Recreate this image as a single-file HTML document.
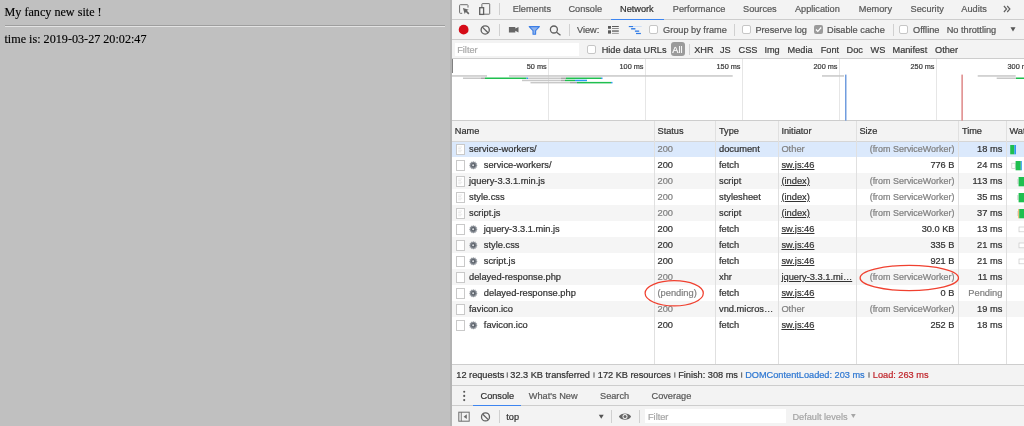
<!DOCTYPE html><html><head><meta charset="utf-8"><style>
html,body{margin:0;padding:0;width:1024px;height:426px;overflow:hidden;position:relative;background:#c0c0c0;font-family:"Liberation Sans",sans-serif;}
div{box-sizing:border-box;}
.u{text-decoration:underline;}
</style></head><body><div style="position:absolute;left:0;top:0;width:1024px;height:426px;will-change:transform">
<div style="position:absolute;left:0;top:0;width:450px;height:426px;background:#c0c0c0;font-family:'Liberation Serif',serif;">
<div style="position:absolute;left:4.5px;top:4.61px;font-family:'Liberation Serif', serif;font-size:12.15px;line-height:14.58px;color:#000;white-space:nowrap;-webkit-text-stroke:0.15px #000">My fancy new site !</div>
<div style="position:absolute;left:4.5px;top:25px;width:440.5px;height:1px;background:#9e9e9e"></div>
<div style="position:absolute;left:4.5px;top:26px;width:440.5px;height:1px;background:#e3e3e3"></div>
<div style="position:absolute;left:4.5px;top:31.61px;font-family:'Liberation Serif', serif;font-size:12.15px;line-height:14.58px;color:#000;white-space:nowrap;-webkit-text-stroke:0.15px #000">time is: 2019-03-27 20:02:47</div>
</div>
<div style="position:absolute;left:451px;top:0;width:573px;height:426px;background:#fff;overflow:hidden">
</div>
<div style="position:absolute;left:451px;top:0px;width:573px;height:19px;background:#f3f3f3"></div>
<div style="position:absolute;left:451px;top:19px;width:573px;height:1px;background:#cdcdcd"></div>
<div style="position:absolute;left:451px;top:20px;width:573px;height:19px;background:#f3f3f3"></div>
<div style="position:absolute;left:451px;top:39px;width:573px;height:1px;background:#cdcdcd"></div>
<div style="position:absolute;left:451px;top:40px;width:573px;height:18px;background:#f3f3f3"></div>
<div style="position:absolute;left:451px;top:58px;width:573px;height:1px;background:#cdcdcd"></div>
<svg style="position:absolute;left:0;top:0" width="1024" height="426" viewBox="0 0 1024 426">
<g fill="none" stroke="#6d6d6d" stroke-width="1">
<path d="M462.2 13.3 H460.3 Q459.6 13.3 459.6 12.6 V5.4 Q459.6 4.7 460.3 4.7 H467.3 Q468 4.7 468 5.4 V7.6"/>
<rect x="481.9" y="3.6" width="7.8" height="10.6" rx="0.5"/>
</g>
<path d="M462.9 7.9 L468.7 9.7 L466.9 10.8 L469.4 13.3 L468.3 14.4 L465.8 11.9 L464.7 13.9 Z" fill="#666"/>
<rect x="479.7" y="7.7" width="3.9" height="6.7" fill="#f3f3f3" stroke="#5f5f5f" stroke-width="1.3"/>
</svg>
<div style="position:absolute;left:499px;top:3px;width:1px;height:12px;background:#d0d0d0"></div>
<div style="position:absolute;left:512.7px;top:4.39px;font-size:9.2px;line-height:11.04px;color:#5a5a5a;white-space:nowrap;-webkit-text-stroke:0.22px #5a5a5a;">Elements</div>
<div style="position:absolute;left:568.4px;top:4.39px;font-size:9.2px;line-height:11.04px;color:#5a5a5a;white-space:nowrap;-webkit-text-stroke:0.22px #5a5a5a;">Console</div>
<div style="position:absolute;left:620px;top:4.39px;font-size:9.2px;line-height:11.04px;color:#333;white-space:nowrap;-webkit-text-stroke:0.22px #333;">Network</div>
<div style="position:absolute;left:672.8px;top:4.39px;font-size:9.2px;line-height:11.04px;color:#5a5a5a;white-space:nowrap;-webkit-text-stroke:0.22px #5a5a5a;">Performance</div>
<div style="position:absolute;left:743px;top:4.39px;font-size:9.2px;line-height:11.04px;color:#5a5a5a;white-space:nowrap;-webkit-text-stroke:0.22px #5a5a5a;">Sources</div>
<div style="position:absolute;left:794.9px;top:4.39px;font-size:9.2px;line-height:11.04px;color:#5a5a5a;white-space:nowrap;-webkit-text-stroke:0.22px #5a5a5a;">Application</div>
<div style="position:absolute;left:858.8px;top:4.39px;font-size:9.2px;line-height:11.04px;color:#5a5a5a;white-space:nowrap;-webkit-text-stroke:0.22px #5a5a5a;">Memory</div>
<div style="position:absolute;left:910.6px;top:4.39px;font-size:9.2px;line-height:11.04px;color:#5a5a5a;white-space:nowrap;-webkit-text-stroke:0.22px #5a5a5a;">Security</div>
<div style="position:absolute;left:961.3px;top:4.39px;font-size:9.2px;line-height:11.04px;color:#5a5a5a;white-space:nowrap;-webkit-text-stroke:0.22px #5a5a5a;">Audits</div>
<svg style="position:absolute;left:1003px;top:5px" width="9" height="9" viewBox="0 0 9 9"><path d="M0.9 1 L3.6 4 L0.9 7 M4.2 1 L6.9 4 L4.2 7" fill="none" stroke="#606060" stroke-width="1.15"/></svg>
<div style="position:absolute;left:611px;top:18.5px;width:53px;height:1.5px;background:#3d85f0"></div>
<svg style="position:absolute;left:0;top:0" width="1024" height="426" viewBox="0 0 1024 426">
<circle cx="463.65" cy="29.65" r="4.9" fill="#d50b17"/>
<g fill="none" stroke="#5f5f5f" stroke-width="1.3">
<circle cx="485.2" cy="29.95" r="4.1"/>
<path d="M482.4 27.1 L488 32.8"/>
<circle cx="553.9" cy="29.5" r="3.5"/>
<path d="M556.5 32.2 L560.5 35.2"/>
</g>
<path d="M508.9 27 H515.3 V28.6 L518.5 27 V32.4 L515.3 30.8 V32.4 H508.9 Z" fill="#666"/>
<path d="M529.2 26.6 H539.4 L535.6 30.6 V34.3 H533 V30.6 Z" fill="#8fb3ec" stroke="#3b7ee6" stroke-width="1.1" stroke-linejoin="round"/>
<g fill="#5a5a5a">
<rect x="608" y="26" width="3" height="2.8"/><rect x="612" y="26" width="6.8" height="1"/><rect x="612" y="28" width="6.8" height="0.9" fill="#808080"/>
<rect x="608" y="30.3" width="3" height="3.3"/><rect x="612" y="30.4" width="6.8" height="1.3"/><rect x="612" y="32.9" width="6.8" height="0.9" fill="#909090"/>
</g>
<g fill="#2f7be6">
<rect x="628.8" y="26" width="4.3" height="1.1"/><rect x="633" y="26.1" width="8.7" height="0.8" fill="#c5d8f5"/>
<rect x="631.1" y="28.1" width="4.3" height="1.4"/>
<rect x="634.9" y="30.5" width="4.3" height="1.3"/>
<rect x="636" y="32.9" width="4.9" height="1.2"/>
</g>
</svg>
<div style="position:absolute;left:499px;top:24px;width:1px;height:12px;background:#d0d0d0"></div>
<div style="position:absolute;left:569px;top:24px;width:1px;height:12px;background:#d0d0d0"></div>
<div style="position:absolute;left:577px;top:24.89px;font-size:9.2px;line-height:11.04px;color:#555;white-space:nowrap;-webkit-text-stroke:0.22px #555;">View:</div>
<div style="position:absolute;left:649.3px;top:25.4px;width:9px;height:9px;background:#fff;border:1px solid #c6c6c6;border-radius:2px"></div>
<div style="position:absolute;left:663px;top:24.89px;font-size:9.2px;line-height:11.04px;color:#555;white-space:nowrap;-webkit-text-stroke:0.22px #555;">Group by frame</div>
<div style="position:absolute;left:734px;top:24px;width:1px;height:12px;background:#d0d0d0"></div>
<div style="position:absolute;left:741.5px;top:25.4px;width:9px;height:9px;background:#fff;border:1px solid #c6c6c6;border-radius:2px"></div>
<div style="position:absolute;left:755.4px;top:24.89px;font-size:9.2px;line-height:11.04px;color:#555;white-space:nowrap;-webkit-text-stroke:0.22px #555;">Preserve log</div>
<div style="position:absolute;left:813.5px;top:25.4px;width:9px;height:9px;background:#9b9b9b;border-radius:2px"></div>
<svg style="position:absolute;left:813.5px;top:25.4px" width="9" height="9"><path d="M2 4.5 L3.8 6.4 L7.2 2.5" fill="none" stroke="#fff" stroke-width="1.2"/></svg>
<div style="position:absolute;left:827.1px;top:24.89px;font-size:9.2px;line-height:11.04px;color:#555;white-space:nowrap;-webkit-text-stroke:0.22px #555;">Disable cache</div>
<div style="position:absolute;left:892.5px;top:24px;width:1px;height:12px;background:#d0d0d0"></div>
<div style="position:absolute;left:899.2px;top:25.4px;width:9px;height:9px;background:#fff;border:1px solid #c6c6c6;border-radius:2px"></div>
<div style="position:absolute;left:913px;top:24.89px;font-size:9.2px;line-height:11.04px;color:#555;white-space:nowrap;-webkit-text-stroke:0.22px #555;">Offline</div>
<div style="position:absolute;left:946.7px;top:24.89px;font-size:9.2px;line-height:11.04px;color:#555;white-space:nowrap;-webkit-text-stroke:0.22px #555;">No throttling</div>
<div style="position:absolute;left:455px;top:43px;width:123.6px;height:13.2px;background:#fff"></div>
<div style="position:absolute;left:457.2px;top:45.29px;font-size:9.2px;line-height:11.04px;color:#a9a9a9;white-space:nowrap;-webkit-text-stroke:0.22px #a9a9a9;">Filter</div>
<div style="position:absolute;left:587.4px;top:45px;width:9px;height:9px;background:#fff;border:1px solid #c6c6c6;border-radius:2px"></div>
<div style="position:absolute;left:601.7px;top:44.79px;font-size:9.2px;line-height:11.04px;color:#3a3a3a;white-space:nowrap;-webkit-text-stroke:0.22px #3a3a3a;">Hide data URLs</div>
<div style="position:absolute;left:671px;top:42.2px;width:14px;height:14.2px;background:#9b9b9b;border-radius:3px"></div>
<div style="position:absolute;left:672.3px;top:44.79px;font-size:9.2px;line-height:11.04px;color:#fff;white-space:nowrap;-webkit-text-stroke:0.22px #fff;">All</div>
<div style="position:absolute;left:688.5px;top:43.5px;width:1px;height:11.5px;background:#d0d0d0"></div>
<div style="position:absolute;left:694.2px;top:44.79px;font-size:9.2px;line-height:11.04px;color:#3a3a3a;white-space:nowrap;-webkit-text-stroke:0.22px #3a3a3a;">XHR</div>
<div style="position:absolute;left:719.9px;top:44.79px;font-size:9.2px;line-height:11.04px;color:#3a3a3a;white-space:nowrap;-webkit-text-stroke:0.22px #3a3a3a;">JS</div>
<div style="position:absolute;left:738.6px;top:44.79px;font-size:9.2px;line-height:11.04px;color:#3a3a3a;white-space:nowrap;-webkit-text-stroke:0.22px #3a3a3a;">CSS</div>
<div style="position:absolute;left:764.4px;top:44.79px;font-size:9.2px;line-height:11.04px;color:#3a3a3a;white-space:nowrap;-webkit-text-stroke:0.22px #3a3a3a;">Img</div>
<div style="position:absolute;left:787.6px;top:44.79px;font-size:9.2px;line-height:11.04px;color:#3a3a3a;white-space:nowrap;-webkit-text-stroke:0.22px #3a3a3a;">Media</div>
<div style="position:absolute;left:820.7px;top:44.79px;font-size:9.2px;line-height:11.04px;color:#3a3a3a;white-space:nowrap;-webkit-text-stroke:0.22px #3a3a3a;">Font</div>
<div style="position:absolute;left:846.5px;top:44.79px;font-size:9.2px;line-height:11.04px;color:#3a3a3a;white-space:nowrap;-webkit-text-stroke:0.22px #3a3a3a;">Doc</div>
<div style="position:absolute;left:870.5px;top:44.79px;font-size:9.2px;line-height:11.04px;color:#3a3a3a;white-space:nowrap;-webkit-text-stroke:0.22px #3a3a3a;">WS</div>
<div style="position:absolute;left:892.5px;top:44.79px;font-size:9.2px;line-height:11.04px;color:#3a3a3a;white-space:nowrap;-webkit-text-stroke:0.22px #3a3a3a;">Manifest</div>
<div style="position:absolute;left:935px;top:44.79px;font-size:9.2px;line-height:11.04px;color:#3a3a3a;white-space:nowrap;-webkit-text-stroke:0.22px #3a3a3a;">Other</div>
<div style="position:absolute;left:451px;top:59px;width:573px;height:61px;background:#fff"></div>
<div style="position:absolute;left:451px;top:120px;width:573px;height:1px;background:#cdcdcd"></div>
<div style="position:absolute;left:548px;top:59px;width:1px;height:61px;background:#e6e6e6"></div>
<div style="position:absolute;left:645px;top:59px;width:1px;height:61px;background:#e6e6e6"></div>
<div style="position:absolute;left:742px;top:59px;width:1px;height:61px;background:#e6e6e6"></div>
<div style="position:absolute;left:839px;top:59px;width:1px;height:61px;background:#e6e6e6"></div>
<div style="position:absolute;left:936px;top:59px;width:1px;height:61px;background:#e6e6e6"></div>
<div style="position:absolute;right:477.4px;top:63.49px;font-size:7.3px;line-height:8.76px;color:#3c3c3c;white-space:nowrap;text-align:right;-webkit-text-stroke:0.22px #3c3c3c;">50 ms</div>
<div style="position:absolute;right:380.5px;top:63.49px;font-size:7.3px;line-height:8.76px;color:#3c3c3c;white-space:nowrap;text-align:right;-webkit-text-stroke:0.22px #3c3c3c;">100 ms</div>
<div style="position:absolute;right:283.5px;top:63.49px;font-size:7.3px;line-height:8.76px;color:#3c3c3c;white-space:nowrap;text-align:right;-webkit-text-stroke:0.22px #3c3c3c;">150 ms</div>
<div style="position:absolute;right:186.5px;top:63.49px;font-size:7.3px;line-height:8.76px;color:#3c3c3c;white-space:nowrap;text-align:right;-webkit-text-stroke:0.22px #3c3c3c;">200 ms</div>
<div style="position:absolute;right:89.5px;top:63.49px;font-size:7.3px;line-height:8.76px;color:#3c3c3c;white-space:nowrap;text-align:right;-webkit-text-stroke:0.22px #3c3c3c;">250 ms</div>
<div style="position:absolute;right:-7.5px;top:63.49px;font-size:7.3px;line-height:8.76px;color:#3c3c3c;white-space:nowrap;text-align:right;-webkit-text-stroke:0.22px #3c3c3c;">300 ms</div>
<div style="position:absolute;left:452px;top:59px;width:1.2px;height:13.5px;background:#808080"></div>
<svg style="position:absolute;left:0;top:0" width="1024" height="426" viewBox="0 0 1024 426">
<g>
<rect x="452" y="75.2" width="35" height="1.5" fill="#c8c8c8"/>
<rect x="509" y="75.2" width="223.7" height="1.5" fill="#c8c8c8"/>
<rect x="822" y="75.2" width="22" height="1.5" fill="#c8c8c8"/>
<rect x="977.7" y="75.2" width="38" height="1.5" fill="#c8c8c8"/>
<rect x="463" y="77.5" width="18" height="1.5" fill="#c8c8c8"/>
<rect x="481" y="77.5" width="4" height="1.5" fill="#a8a8a8"/>
<rect x="485" y="77.5" width="41.5" height="1.5" fill="#1fbf4f"/>
<rect x="526.5" y="77.5" width="1.5" height="1.5" fill="#2d97f0"/>
<rect x="528" y="77.5" width="33" height="1.5" fill="#c8c8c8"/>
<rect x="561" y="77.5" width="5" height="1.5" fill="#a8a8a8"/>
<rect x="566" y="77.5" width="35" height="1.5" fill="#1fbf4f"/>
<rect x="601" y="77.5" width="1.5" height="1.5" fill="#2d97f0"/>
<rect x="996.7" y="77.5" width="19.3" height="1.5" fill="#c8c8c8"/>
<rect x="1016" y="77.5" width="8" height="1.5" fill="#1fbf4f"/>
<rect x="522" y="79.7" width="39" height="1.5" fill="#c8c8c8"/>
<rect x="561" y="79.7" width="4" height="1.5" fill="#a8a8a8"/>
<rect x="565" y="79.7" width="10" height="1.5" fill="#1fbf4f"/>
<rect x="575" y="79.7" width="12" height="1.5" fill="#2d97f0"/>
<rect x="530.5" y="81.9" width="39.5" height="1.5" fill="#c8c8c8"/>
<rect x="570" y="81.9" width="7" height="1.5" fill="#a8a8a8"/>
<rect x="577" y="81.9" width="34" height="1.5" fill="#1fbf4f"/>
<rect x="611" y="81.9" width="1.5" height="1.5" fill="#2d97f0"/>
</g>
<rect x="845.2" y="74.6" width="1.2" height="46" fill="#4f86d6"/>
<rect x="961.5" y="74.6" width="1.2" height="46" fill="#d66a6a"/>
</svg>
<div style="position:absolute;left:451px;top:121px;width:573px;height:20px;background:#f3f3f3"></div>
<div style="position:absolute;left:451px;top:141px;width:573px;height:223px;background:#fff"></div>
<div style="position:absolute;left:451px;top:141px;width:573px;height:16px;background:#dbe9fc"></div>
<div style="position:absolute;left:451px;top:173px;width:573px;height:16px;background:#f5f5f5"></div>
<div style="position:absolute;left:451px;top:205px;width:573px;height:16px;background:#f5f5f5"></div>
<div style="position:absolute;left:451px;top:237px;width:573px;height:16px;background:#f5f5f5"></div>
<div style="position:absolute;left:451px;top:269px;width:573px;height:16px;background:#f5f5f5"></div>
<div style="position:absolute;left:451px;top:301px;width:573px;height:16px;background:#f5f5f5"></div>
<div style="position:absolute;left:451px;top:141px;width:573px;height:1px;background:#d6d6d6"></div>
<div style="position:absolute;left:654px;top:121px;width:1px;height:243px;background:#e0e0e0"></div>
<div style="position:absolute;left:715px;top:121px;width:1px;height:243px;background:#e0e0e0"></div>
<div style="position:absolute;left:778px;top:121px;width:1px;height:243px;background:#e0e0e0"></div>
<div style="position:absolute;left:856px;top:121px;width:1px;height:243px;background:#e0e0e0"></div>
<div style="position:absolute;left:958px;top:121px;width:1px;height:243px;background:#e0e0e0"></div>
<div style="position:absolute;left:1006px;top:121px;width:1px;height:243px;background:#e0e0e0"></div>
<div style="position:absolute;left:454.8px;top:125.79px;font-size:9.2px;line-height:11.04px;color:#333;white-space:nowrap;-webkit-text-stroke:0.22px #333;">Name</div>
<div style="position:absolute;left:657.5px;top:125.79px;font-size:9.2px;line-height:11.04px;color:#333;white-space:nowrap;-webkit-text-stroke:0.22px #333;">Status</div>
<div style="position:absolute;left:719px;top:125.79px;font-size:9.2px;line-height:11.04px;color:#333;white-space:nowrap;-webkit-text-stroke:0.22px #333;">Type</div>
<div style="position:absolute;left:781.4px;top:125.79px;font-size:9.2px;line-height:11.04px;color:#333;white-space:nowrap;-webkit-text-stroke:0.22px #333;">Initiator</div>
<div style="position:absolute;left:859.4px;top:125.79px;font-size:9.2px;line-height:11.04px;color:#333;white-space:nowrap;-webkit-text-stroke:0.22px #333;">Size</div>
<div style="position:absolute;left:961.9px;top:125.79px;font-size:9.2px;line-height:11.04px;color:#333;white-space:nowrap;-webkit-text-stroke:0.22px #333;">Time</div>
<div style="position:absolute;left:1009.5px;top:125.79px;font-size:9.2px;line-height:11.04px;color:#333;white-space:nowrap;-webkit-text-stroke:0.22px #333;">Waterfall</div>
<div style="position:absolute;left:456.2px;top:144.2px;width:8.6px;height:10.4px;background:#fff;border:1px solid #c9c9c9"></div>
<svg style="position:absolute;left:456px;top:144px" width="9" height="11"><path d="M2.2 3 H6 M2.2 4.6 H5 M2.2 6.2 H6.2 M2.2 7.8 H5.2" stroke="#e2e2e2" stroke-width="0.8"/></svg>
<div style="position:absolute;left:469px;top:144.10px;font-size:9.3px;line-height:11.16px;color:#333;white-space:nowrap;-webkit-text-stroke:0.22px #333;">service-workers/</div>
<div style="position:absolute;left:657.5px;top:144.10px;font-size:9.3px;line-height:11.16px;color:#808080;white-space:nowrap;-webkit-text-stroke:0.22px #808080;">200</div>
<div style="position:absolute;left:719px;top:144.10px;font-size:9.3px;line-height:11.16px;color:#333;white-space:nowrap;-webkit-text-stroke:0.22px #333;">document</div>
<div style="position:absolute;left:781.4px;top:144.10px;font-size:9.3px;line-height:11.16px;color:#808080;white-space:nowrap;-webkit-text-stroke:0.22px #808080;">Other</div>
<div style="position:absolute;right:69.60000000000002px;top:144.43px;font-size:8.95px;line-height:10.74px;color:#808080;white-space:nowrap;text-align:right;-webkit-text-stroke:0.22px #808080;">(from ServiceWorker)</div>
<div style="position:absolute;right:21.600000000000023px;top:144.10px;font-size:9.3px;line-height:11.16px;color:#333;white-space:nowrap;text-align:right;-webkit-text-stroke:0.22px #333;">18 ms</div>
<div style="position:absolute;left:456.2px;top:160.2px;width:8.6px;height:10.4px;background:#fff;border:1px solid #c9c9c9"></div>
<svg style="position:absolute;left:468px;top:159.6px" width="11" height="11" viewBox="0 0 11 11"><path d="M9.35 5.30 L8.44 6.14 L8.81 7.32 L7.60 7.60 L7.33 8.81 L6.14 8.44 L5.30 9.35 L4.46 8.44 L3.28 8.81 L3.00 7.60 L1.79 7.32 L2.16 6.14 L1.25 5.30 L2.16 4.46 L1.79 3.28 L3.00 3.00 L3.27 1.79 L4.46 2.16 L5.30 1.25 L6.14 2.16 L7.33 1.79 L7.60 3.00 L8.81 3.27 L8.44 4.46 Z" fill="#848a92" stroke="#9ba0a7" stroke-width="0.3" stroke-linejoin="round"/><circle cx="5.3" cy="5.3" r="2.2" fill="#5d636b"/><circle cx="5.1" cy="5.2" r="1.0" fill="#dde0e4"/></svg>
<div style="position:absolute;left:483.8px;top:160.10px;font-size:9.3px;line-height:11.16px;color:#333;white-space:nowrap;-webkit-text-stroke:0.22px #333;">service-workers/</div>
<div style="position:absolute;left:657.5px;top:160.10px;font-size:9.3px;line-height:11.16px;color:#333;white-space:nowrap;-webkit-text-stroke:0.22px #333;">200</div>
<div style="position:absolute;left:719px;top:160.10px;font-size:9.3px;line-height:11.16px;color:#333;white-space:nowrap;-webkit-text-stroke:0.22px #333;">fetch</div>
<div style="position:absolute;left:781.4px;top:160.10px;font-size:9.3px;line-height:11.16px;color:#333;white-space:nowrap;-webkit-text-stroke:0.22px #333;text-decoration:underline">sw.js:46</div>
<div style="position:absolute;right:69.60000000000002px;top:160.19px;font-size:9.2px;line-height:11.04px;color:#333;white-space:nowrap;text-align:right;-webkit-text-stroke:0.22px #333;">776 B</div>
<div style="position:absolute;right:21.600000000000023px;top:160.10px;font-size:9.3px;line-height:11.16px;color:#333;white-space:nowrap;text-align:right;-webkit-text-stroke:0.22px #333;">24 ms</div>
<div style="position:absolute;left:456.2px;top:176.2px;width:8.6px;height:10.4px;background:#fff;border:1px solid #c9c9c9"></div>
<svg style="position:absolute;left:456px;top:176px" width="9" height="11"><path d="M2.2 3 H6 M2.2 4.6 H5 M2.2 6.2 H6.2 M2.2 7.8 H5.2" stroke="#e2e2e2" stroke-width="0.8"/></svg>
<div style="position:absolute;left:469px;top:176.10px;font-size:9.3px;line-height:11.16px;color:#333;white-space:nowrap;-webkit-text-stroke:0.22px #333;">jquery-3.3.1.min.js</div>
<div style="position:absolute;left:657.5px;top:176.10px;font-size:9.3px;line-height:11.16px;color:#808080;white-space:nowrap;-webkit-text-stroke:0.22px #808080;">200</div>
<div style="position:absolute;left:719px;top:176.10px;font-size:9.3px;line-height:11.16px;color:#333;white-space:nowrap;-webkit-text-stroke:0.22px #333;">script</div>
<div style="position:absolute;left:781.4px;top:176.10px;font-size:9.3px;line-height:11.16px;color:#333;white-space:nowrap;-webkit-text-stroke:0.22px #333;text-decoration:underline">(index)</div>
<div style="position:absolute;right:69.60000000000002px;top:176.43px;font-size:8.95px;line-height:10.74px;color:#808080;white-space:nowrap;text-align:right;-webkit-text-stroke:0.22px #808080;">(from ServiceWorker)</div>
<div style="position:absolute;right:21.600000000000023px;top:176.10px;font-size:9.3px;line-height:11.16px;color:#333;white-space:nowrap;text-align:right;-webkit-text-stroke:0.22px #333;">113 ms</div>
<div style="position:absolute;left:456.2px;top:192.2px;width:8.6px;height:10.4px;background:#fff;border:1px solid #c9c9c9"></div>
<svg style="position:absolute;left:456px;top:192px" width="9" height="11"><path d="M2.2 3 H6 M2.2 4.6 H5 M2.2 6.2 H6.2 M2.2 7.8 H5.2" stroke="#e2e2e2" stroke-width="0.8"/></svg>
<div style="position:absolute;left:469px;top:192.10px;font-size:9.3px;line-height:11.16px;color:#333;white-space:nowrap;-webkit-text-stroke:0.22px #333;">style.css</div>
<div style="position:absolute;left:657.5px;top:192.10px;font-size:9.3px;line-height:11.16px;color:#808080;white-space:nowrap;-webkit-text-stroke:0.22px #808080;">200</div>
<div style="position:absolute;left:719px;top:192.10px;font-size:9.3px;line-height:11.16px;color:#333;white-space:nowrap;-webkit-text-stroke:0.22px #333;">stylesheet</div>
<div style="position:absolute;left:781.4px;top:192.10px;font-size:9.3px;line-height:11.16px;color:#333;white-space:nowrap;-webkit-text-stroke:0.22px #333;text-decoration:underline">(index)</div>
<div style="position:absolute;right:69.60000000000002px;top:192.43px;font-size:8.95px;line-height:10.74px;color:#808080;white-space:nowrap;text-align:right;-webkit-text-stroke:0.22px #808080;">(from ServiceWorker)</div>
<div style="position:absolute;right:21.600000000000023px;top:192.10px;font-size:9.3px;line-height:11.16px;color:#333;white-space:nowrap;text-align:right;-webkit-text-stroke:0.22px #333;">35 ms</div>
<div style="position:absolute;left:456.2px;top:208.2px;width:8.6px;height:10.4px;background:#fff;border:1px solid #c9c9c9"></div>
<svg style="position:absolute;left:456px;top:208px" width="9" height="11"><path d="M2.2 3 H6 M2.2 4.6 H5 M2.2 6.2 H6.2 M2.2 7.8 H5.2" stroke="#e2e2e2" stroke-width="0.8"/></svg>
<div style="position:absolute;left:469px;top:208.10px;font-size:9.3px;line-height:11.16px;color:#333;white-space:nowrap;-webkit-text-stroke:0.22px #333;">script.js</div>
<div style="position:absolute;left:657.5px;top:208.10px;font-size:9.3px;line-height:11.16px;color:#808080;white-space:nowrap;-webkit-text-stroke:0.22px #808080;">200</div>
<div style="position:absolute;left:719px;top:208.10px;font-size:9.3px;line-height:11.16px;color:#333;white-space:nowrap;-webkit-text-stroke:0.22px #333;">script</div>
<div style="position:absolute;left:781.4px;top:208.10px;font-size:9.3px;line-height:11.16px;color:#333;white-space:nowrap;-webkit-text-stroke:0.22px #333;text-decoration:underline">(index)</div>
<div style="position:absolute;right:69.60000000000002px;top:208.43px;font-size:8.95px;line-height:10.74px;color:#808080;white-space:nowrap;text-align:right;-webkit-text-stroke:0.22px #808080;">(from ServiceWorker)</div>
<div style="position:absolute;right:21.600000000000023px;top:208.10px;font-size:9.3px;line-height:11.16px;color:#333;white-space:nowrap;text-align:right;-webkit-text-stroke:0.22px #333;">37 ms</div>
<div style="position:absolute;left:456.2px;top:224.2px;width:8.6px;height:10.4px;background:#fff;border:1px solid #c9c9c9"></div>
<svg style="position:absolute;left:468px;top:223.6px" width="11" height="11" viewBox="0 0 11 11"><path d="M9.35 5.30 L8.44 6.14 L8.81 7.32 L7.60 7.60 L7.33 8.81 L6.14 8.44 L5.30 9.35 L4.46 8.44 L3.28 8.81 L3.00 7.60 L1.79 7.32 L2.16 6.14 L1.25 5.30 L2.16 4.46 L1.79 3.28 L3.00 3.00 L3.27 1.79 L4.46 2.16 L5.30 1.25 L6.14 2.16 L7.33 1.79 L7.60 3.00 L8.81 3.27 L8.44 4.46 Z" fill="#848a92" stroke="#9ba0a7" stroke-width="0.3" stroke-linejoin="round"/><circle cx="5.3" cy="5.3" r="2.2" fill="#5d636b"/><circle cx="5.1" cy="5.2" r="1.0" fill="#dde0e4"/></svg>
<div style="position:absolute;left:483.8px;top:224.10px;font-size:9.3px;line-height:11.16px;color:#333;white-space:nowrap;-webkit-text-stroke:0.22px #333;">jquery-3.3.1.min.js</div>
<div style="position:absolute;left:657.5px;top:224.10px;font-size:9.3px;line-height:11.16px;color:#333;white-space:nowrap;-webkit-text-stroke:0.22px #333;">200</div>
<div style="position:absolute;left:719px;top:224.10px;font-size:9.3px;line-height:11.16px;color:#333;white-space:nowrap;-webkit-text-stroke:0.22px #333;">fetch</div>
<div style="position:absolute;left:781.4px;top:224.10px;font-size:9.3px;line-height:11.16px;color:#333;white-space:nowrap;-webkit-text-stroke:0.22px #333;text-decoration:underline">sw.js:46</div>
<div style="position:absolute;right:69.60000000000002px;top:224.19px;font-size:9.2px;line-height:11.04px;color:#333;white-space:nowrap;text-align:right;-webkit-text-stroke:0.22px #333;">30.0 KB</div>
<div style="position:absolute;right:21.600000000000023px;top:224.10px;font-size:9.3px;line-height:11.16px;color:#333;white-space:nowrap;text-align:right;-webkit-text-stroke:0.22px #333;">13 ms</div>
<div style="position:absolute;left:456.2px;top:240.2px;width:8.6px;height:10.4px;background:#fff;border:1px solid #c9c9c9"></div>
<svg style="position:absolute;left:468px;top:239.6px" width="11" height="11" viewBox="0 0 11 11"><path d="M9.35 5.30 L8.44 6.14 L8.81 7.32 L7.60 7.60 L7.33 8.81 L6.14 8.44 L5.30 9.35 L4.46 8.44 L3.28 8.81 L3.00 7.60 L1.79 7.32 L2.16 6.14 L1.25 5.30 L2.16 4.46 L1.79 3.28 L3.00 3.00 L3.27 1.79 L4.46 2.16 L5.30 1.25 L6.14 2.16 L7.33 1.79 L7.60 3.00 L8.81 3.27 L8.44 4.46 Z" fill="#848a92" stroke="#9ba0a7" stroke-width="0.3" stroke-linejoin="round"/><circle cx="5.3" cy="5.3" r="2.2" fill="#5d636b"/><circle cx="5.1" cy="5.2" r="1.0" fill="#dde0e4"/></svg>
<div style="position:absolute;left:483.8px;top:240.10px;font-size:9.3px;line-height:11.16px;color:#333;white-space:nowrap;-webkit-text-stroke:0.22px #333;">style.css</div>
<div style="position:absolute;left:657.5px;top:240.10px;font-size:9.3px;line-height:11.16px;color:#333;white-space:nowrap;-webkit-text-stroke:0.22px #333;">200</div>
<div style="position:absolute;left:719px;top:240.10px;font-size:9.3px;line-height:11.16px;color:#333;white-space:nowrap;-webkit-text-stroke:0.22px #333;">fetch</div>
<div style="position:absolute;left:781.4px;top:240.10px;font-size:9.3px;line-height:11.16px;color:#333;white-space:nowrap;-webkit-text-stroke:0.22px #333;text-decoration:underline">sw.js:46</div>
<div style="position:absolute;right:69.60000000000002px;top:240.19px;font-size:9.2px;line-height:11.04px;color:#333;white-space:nowrap;text-align:right;-webkit-text-stroke:0.22px #333;">335 B</div>
<div style="position:absolute;right:21.600000000000023px;top:240.10px;font-size:9.3px;line-height:11.16px;color:#333;white-space:nowrap;text-align:right;-webkit-text-stroke:0.22px #333;">21 ms</div>
<div style="position:absolute;left:456.2px;top:256.2px;width:8.6px;height:10.4px;background:#fff;border:1px solid #c9c9c9"></div>
<svg style="position:absolute;left:468px;top:255.6px" width="11" height="11" viewBox="0 0 11 11"><path d="M9.35 5.30 L8.44 6.14 L8.81 7.32 L7.60 7.60 L7.33 8.81 L6.14 8.44 L5.30 9.35 L4.46 8.44 L3.28 8.81 L3.00 7.60 L1.79 7.32 L2.16 6.14 L1.25 5.30 L2.16 4.46 L1.79 3.28 L3.00 3.00 L3.27 1.79 L4.46 2.16 L5.30 1.25 L6.14 2.16 L7.33 1.79 L7.60 3.00 L8.81 3.27 L8.44 4.46 Z" fill="#848a92" stroke="#9ba0a7" stroke-width="0.3" stroke-linejoin="round"/><circle cx="5.3" cy="5.3" r="2.2" fill="#5d636b"/><circle cx="5.1" cy="5.2" r="1.0" fill="#dde0e4"/></svg>
<div style="position:absolute;left:483.8px;top:256.10px;font-size:9.3px;line-height:11.16px;color:#333;white-space:nowrap;-webkit-text-stroke:0.22px #333;">script.js</div>
<div style="position:absolute;left:657.5px;top:256.10px;font-size:9.3px;line-height:11.16px;color:#333;white-space:nowrap;-webkit-text-stroke:0.22px #333;">200</div>
<div style="position:absolute;left:719px;top:256.10px;font-size:9.3px;line-height:11.16px;color:#333;white-space:nowrap;-webkit-text-stroke:0.22px #333;">fetch</div>
<div style="position:absolute;left:781.4px;top:256.10px;font-size:9.3px;line-height:11.16px;color:#333;white-space:nowrap;-webkit-text-stroke:0.22px #333;text-decoration:underline">sw.js:46</div>
<div style="position:absolute;right:69.60000000000002px;top:256.19px;font-size:9.2px;line-height:11.04px;color:#333;white-space:nowrap;text-align:right;-webkit-text-stroke:0.22px #333;">921 B</div>
<div style="position:absolute;right:21.600000000000023px;top:256.10px;font-size:9.3px;line-height:11.16px;color:#333;white-space:nowrap;text-align:right;-webkit-text-stroke:0.22px #333;">21 ms</div>
<div style="position:absolute;left:456.2px;top:272.2px;width:8.6px;height:10.4px;background:#fff;border:1px solid #c9c9c9"></div>
<div style="position:absolute;left:469px;top:272.10px;font-size:9.3px;line-height:11.16px;color:#333;white-space:nowrap;-webkit-text-stroke:0.22px #333;">delayed-response.php</div>
<div style="position:absolute;left:657.5px;top:272.10px;font-size:9.3px;line-height:11.16px;color:#808080;white-space:nowrap;-webkit-text-stroke:0.22px #808080;">200</div>
<div style="position:absolute;left:719px;top:272.10px;font-size:9.3px;line-height:11.16px;color:#333;white-space:nowrap;-webkit-text-stroke:0.22px #333;">xhr</div>
<div style="position:absolute;left:781.4px;top:272.10px;font-size:9.3px;line-height:11.16px;color:#333;white-space:nowrap;-webkit-text-stroke:0.22px #333;text-decoration:underline">jquery-3.3.1.mi…</div>
<div style="position:absolute;right:69.60000000000002px;top:272.43px;font-size:8.95px;line-height:10.74px;color:#808080;white-space:nowrap;text-align:right;-webkit-text-stroke:0.22px #808080;">(from ServiceWorker)</div>
<div style="position:absolute;right:21.600000000000023px;top:272.10px;font-size:9.3px;line-height:11.16px;color:#333;white-space:nowrap;text-align:right;-webkit-text-stroke:0.22px #333;">11 ms</div>
<div style="position:absolute;left:456.2px;top:288.2px;width:8.6px;height:10.4px;background:#fff;border:1px solid #c9c9c9"></div>
<svg style="position:absolute;left:468px;top:287.6px" width="11" height="11" viewBox="0 0 11 11"><path d="M9.35 5.30 L8.44 6.14 L8.81 7.32 L7.60 7.60 L7.33 8.81 L6.14 8.44 L5.30 9.35 L4.46 8.44 L3.28 8.81 L3.00 7.60 L1.79 7.32 L2.16 6.14 L1.25 5.30 L2.16 4.46 L1.79 3.28 L3.00 3.00 L3.27 1.79 L4.46 2.16 L5.30 1.25 L6.14 2.16 L7.33 1.79 L7.60 3.00 L8.81 3.27 L8.44 4.46 Z" fill="#848a92" stroke="#9ba0a7" stroke-width="0.3" stroke-linejoin="round"/><circle cx="5.3" cy="5.3" r="2.2" fill="#5d636b"/><circle cx="5.1" cy="5.2" r="1.0" fill="#dde0e4"/></svg>
<div style="position:absolute;left:483.8px;top:288.10px;font-size:9.3px;line-height:11.16px;color:#333;white-space:nowrap;-webkit-text-stroke:0.22px #333;">delayed-response.php</div>
<div style="position:absolute;left:657.5px;top:288.10px;font-size:9.3px;line-height:11.16px;color:#808080;white-space:nowrap;-webkit-text-stroke:0.22px #808080;">(pending)</div>
<div style="position:absolute;left:719px;top:288.10px;font-size:9.3px;line-height:11.16px;color:#333;white-space:nowrap;-webkit-text-stroke:0.22px #333;">fetch</div>
<div style="position:absolute;left:781.4px;top:288.10px;font-size:9.3px;line-height:11.16px;color:#333;white-space:nowrap;-webkit-text-stroke:0.22px #333;text-decoration:underline">sw.js:46</div>
<div style="position:absolute;right:69.60000000000002px;top:288.19px;font-size:9.2px;line-height:11.04px;color:#333;white-space:nowrap;text-align:right;-webkit-text-stroke:0.22px #333;">0 B</div>
<div style="position:absolute;right:21.600000000000023px;top:288.10px;font-size:9.3px;line-height:11.16px;color:#808080;white-space:nowrap;text-align:right;-webkit-text-stroke:0.22px #808080;">Pending</div>
<div style="position:absolute;left:456.2px;top:304.2px;width:8.6px;height:10.4px;background:#fff;border:1px solid #c9c9c9"></div>
<div style="position:absolute;left:469px;top:304.10px;font-size:9.3px;line-height:11.16px;color:#333;white-space:nowrap;-webkit-text-stroke:0.22px #333;">favicon.ico</div>
<div style="position:absolute;left:657.5px;top:304.10px;font-size:9.3px;line-height:11.16px;color:#808080;white-space:nowrap;-webkit-text-stroke:0.22px #808080;">200</div>
<div style="position:absolute;left:719px;top:304.10px;font-size:9.3px;line-height:11.16px;color:#333;white-space:nowrap;-webkit-text-stroke:0.22px #333;">vnd.micros…</div>
<div style="position:absolute;left:781.4px;top:304.10px;font-size:9.3px;line-height:11.16px;color:#808080;white-space:nowrap;-webkit-text-stroke:0.22px #808080;">Other</div>
<div style="position:absolute;right:69.60000000000002px;top:304.43px;font-size:8.95px;line-height:10.74px;color:#808080;white-space:nowrap;text-align:right;-webkit-text-stroke:0.22px #808080;">(from ServiceWorker)</div>
<div style="position:absolute;right:21.600000000000023px;top:304.10px;font-size:9.3px;line-height:11.16px;color:#333;white-space:nowrap;text-align:right;-webkit-text-stroke:0.22px #333;">19 ms</div>
<div style="position:absolute;left:456.2px;top:320.2px;width:8.6px;height:10.4px;background:#fff;border:1px solid #c9c9c9"></div>
<svg style="position:absolute;left:468px;top:319.6px" width="11" height="11" viewBox="0 0 11 11"><path d="M9.35 5.30 L8.44 6.14 L8.81 7.32 L7.60 7.60 L7.33 8.81 L6.14 8.44 L5.30 9.35 L4.46 8.44 L3.28 8.81 L3.00 7.60 L1.79 7.32 L2.16 6.14 L1.25 5.30 L2.16 4.46 L1.79 3.28 L3.00 3.00 L3.27 1.79 L4.46 2.16 L5.30 1.25 L6.14 2.16 L7.33 1.79 L7.60 3.00 L8.81 3.27 L8.44 4.46 Z" fill="#848a92" stroke="#9ba0a7" stroke-width="0.3" stroke-linejoin="round"/><circle cx="5.3" cy="5.3" r="2.2" fill="#5d636b"/><circle cx="5.1" cy="5.2" r="1.0" fill="#dde0e4"/></svg>
<div style="position:absolute;left:483.8px;top:320.10px;font-size:9.3px;line-height:11.16px;color:#333;white-space:nowrap;-webkit-text-stroke:0.22px #333;">favicon.ico</div>
<div style="position:absolute;left:657.5px;top:320.10px;font-size:9.3px;line-height:11.16px;color:#333;white-space:nowrap;-webkit-text-stroke:0.22px #333;">200</div>
<div style="position:absolute;left:719px;top:320.10px;font-size:9.3px;line-height:11.16px;color:#333;white-space:nowrap;-webkit-text-stroke:0.22px #333;">fetch</div>
<div style="position:absolute;left:781.4px;top:320.10px;font-size:9.3px;line-height:11.16px;color:#333;white-space:nowrap;-webkit-text-stroke:0.22px #333;text-decoration:underline">sw.js:46</div>
<div style="position:absolute;right:69.60000000000002px;top:320.19px;font-size:9.2px;line-height:11.04px;color:#333;white-space:nowrap;text-align:right;-webkit-text-stroke:0.22px #333;">252 B</div>
<div style="position:absolute;right:21.600000000000023px;top:320.10px;font-size:9.3px;line-height:11.16px;color:#333;white-space:nowrap;text-align:right;-webkit-text-stroke:0.22px #333;">18 ms</div>
<svg style="position:absolute;left:0;top:0" width="1024" height="426" viewBox="0 0 1024 426">
<rect x="1010.2" y="145" width="4.2" height="9.3" fill="#1fbf4f"/><rect x="1014.4" y="145" width="1.6" height="9.3" fill="#2d97f0"/>
<rect x="1011.8" y="163.2" width="3.4" height="5.4" fill="#fff" stroke="#c8c8c8" stroke-width="0.7"/>
<rect x="1015.6" y="161" width="5.2" height="9.3" fill="#1fbf4f"/><rect x="1020.8" y="161" width="1" height="9.3" fill="#2d97f0"/>
<rect x="1017" y="179" width="1.5" height="5" fill="#ddd"/><rect x="1018.6" y="177" width="6" height="9.3" fill="#1fbf4f"/>
<rect x="1017" y="195" width="1.5" height="5" fill="#ddd"/><rect x="1018.6" y="193" width="6" height="9.3" fill="#1fbf4f"/>
<rect x="1017" y="211" width="1.5" height="5" fill="#ddd"/><rect x="1018.4" y="209" width="0.8" height="9.3" fill="#f0a030"/><rect x="1019.2" y="209" width="5" height="9.3" fill="#1fbf4f"/>
<rect x="1019" y="227" width="6" height="4.8" fill="#fff" stroke="#c8c8c8" stroke-width="0.7"/>
<rect x="1019" y="243" width="6" height="4.8" fill="#fff" stroke="#c8c8c8" stroke-width="0.7"/>
<rect x="1019" y="259" width="6" height="4.8" fill="#fff" stroke="#c8c8c8" stroke-width="0.7"/>
<ellipse cx="674.2" cy="293.3" rx="29.1" ry="12.6" fill="none" stroke="#f0402f" stroke-width="1.25"/>
<ellipse cx="909.3" cy="278" rx="49.2" ry="12.6" fill="none" stroke="#f0402f" stroke-width="1.25"/>
</svg>
<div style="position:absolute;left:451px;top:364px;width:573px;height:1px;background:#cdcdcd"></div>
<div style="position:absolute;left:451px;top:365px;width:573px;height:20px;background:#f3f3f3"></div>
<div style="position:absolute;left:451px;top:385px;width:573px;height:1px;background:#cdcdcd"></div>
<div style="position:absolute;left:456.3px;top:370.19px;font-size:9.2px;line-height:11.04px;color:#333;white-space:nowrap;-webkit-text-stroke:0.22px #333;">12 requests</div>
<div style="position:absolute;left:510.3px;top:370.19px;font-size:9.2px;line-height:11.04px;color:#333;white-space:nowrap;-webkit-text-stroke:0.22px #333;">32.3 KB transferred</div>
<div style="position:absolute;left:597.8px;top:370.19px;font-size:9.2px;line-height:11.04px;color:#333;white-space:nowrap;-webkit-text-stroke:0.22px #333;">172 KB resources</div>
<div style="position:absolute;left:678.2px;top:370.19px;font-size:9.2px;line-height:11.04px;color:#333;white-space:nowrap;-webkit-text-stroke:0.22px #333;">Finish: 308 ms</div>
<div style="position:absolute;left:745.2px;top:370.19px;font-size:9.2px;line-height:11.04px;color:#2f78d2;white-space:nowrap;-webkit-text-stroke:0.22px #2f78d2;">DOMContentLoaded: 203 ms</div>
<div style="position:absolute;left:872.8px;top:370.19px;font-size:9.2px;line-height:11.04px;color:#c1272d;white-space:nowrap;-webkit-text-stroke:0.22px #c1272d;">Load: 263 ms</div>
<svg style="position:absolute;left:0;top:0" width="1024" height="426"><rect x="506.70" y="372.3" width="1.2" height="5.4" fill="#6f6f6f"/><rect x="593.40" y="372.3" width="1.2" height="5.4" fill="#6f6f6f"/><rect x="674.20" y="372.3" width="1.2" height="5.4" fill="#6f6f6f"/><rect x="741.00" y="372.3" width="1.2" height="5.4" fill="#6f6f6f"/><rect x="868.40" y="372.3" width="1.2" height="5.4" fill="#6f6f6f"/></svg>
<div style="position:absolute;left:451px;top:386px;width:573px;height:19px;background:#f3f3f3"></div>
<div style="position:absolute;left:451px;top:405px;width:573px;height:1px;background:#cdcdcd"></div>
<svg style="position:absolute;left:462px;top:390px" width="5" height="12"><circle cx="2.2" cy="1.7" r="1.05" fill="#555"/><circle cx="2.2" cy="5.9" r="1.05" fill="#555"/><circle cx="2.2" cy="10.1" r="1.05" fill="#555"/></svg>
<div style="position:absolute;left:480.5px;top:391.19px;font-size:9.2px;line-height:11.04px;color:#333;white-space:nowrap;-webkit-text-stroke:0.22px #333;">Console</div>
<div style="position:absolute;left:528.8px;top:391.19px;font-size:9.2px;line-height:11.04px;color:#5a5a5a;white-space:nowrap;-webkit-text-stroke:0.22px #5a5a5a;">What's New</div>
<div style="position:absolute;left:600px;top:391.19px;font-size:9.2px;line-height:11.04px;color:#5a5a5a;white-space:nowrap;-webkit-text-stroke:0.22px #5a5a5a;">Search</div>
<div style="position:absolute;left:651.5px;top:391.19px;font-size:9.2px;line-height:11.04px;color:#5a5a5a;white-space:nowrap;-webkit-text-stroke:0.22px #5a5a5a;">Coverage</div>
<div style="position:absolute;left:473px;top:404.5px;width:48.3px;height:1.5px;background:#3d85f0"></div>
<div style="position:absolute;left:451px;top:406px;width:573px;height:20px;background:#f3f3f3"></div>
<svg style="position:absolute;left:0;top:0" width="1024" height="426" viewBox="0 0 1024 426">
<rect x="458.8" y="412.2" width="10.4" height="9" fill="none" stroke="#6d6d6d" stroke-width="1"/>
<rect x="460.8" y="412.2" width="0.9" height="9" fill="#6d6d6d"/>
<path d="M466.8 414.3 V419.1 L463.6 416.7 Z" fill="#6d6d6d"/>
<g fill="none" stroke="#5f5f5f" stroke-width="1.3">
<circle cx="485.5" cy="416.9" r="4"/>
<path d="M482.8 414.2 L488.2 419.6"/>
</g>
<path d="M618.9 416.6 C621 412.3, 629 412.3, 631.1 416.6 C629 420.9, 621 420.9, 618.9 416.6 Z" fill="#666"/>
<circle cx="625" cy="416.6" r="2.5" fill="#f3f3f3"/><circle cx="625" cy="416.6" r="1.5" fill="#666"/>
</svg>
<div style="position:absolute;left:498.8px;top:410px;width:1px;height:13px;background:#d0d0d0"></div>
<div style="position:absolute;left:506.3px;top:411.69px;font-size:9.2px;line-height:11.04px;color:#333;white-space:nowrap;-webkit-text-stroke:0.22px #333;">top</div>
<div style="position:absolute;left:610.5px;top:410px;width:1px;height:13px;background:#d0d0d0"></div>
<div style="position:absolute;left:638.8px;top:410px;width:1px;height:13px;background:#d0d0d0"></div>
<div style="position:absolute;left:644.7px;top:409.2px;width:141.2px;height:14.3px;background:#fff"></div>
<div style="position:absolute;left:648px;top:412.39px;font-size:9.2px;line-height:11.04px;color:#a6a6a6;white-space:nowrap;-webkit-text-stroke:0.22px #a6a6a6;">Filter</div>
<div style="position:absolute;left:792.4px;top:412.39px;font-size:9.2px;line-height:11.04px;color:#a6a6a6;white-space:nowrap;-webkit-text-stroke:0.22px #a6a6a6;">Default levels</div>
<svg style="position:absolute;left:0;top:0" width="1024" height="426"><path d="M1010.5 27.3 H1015.5 L1013 31.5 Z" fill="#555"/><path d="M598.8 414.7 H603.7 L601.25 418.7 Z" fill="#555"/><path d="M851 414 H855.7 L853.35 418.1 Z" fill="#a6a6a6"/></svg>
<div style="position:absolute;left:450px;top:0px;width:2px;height:426px;background:#b3b3b3"></div>
</div></body></html>
